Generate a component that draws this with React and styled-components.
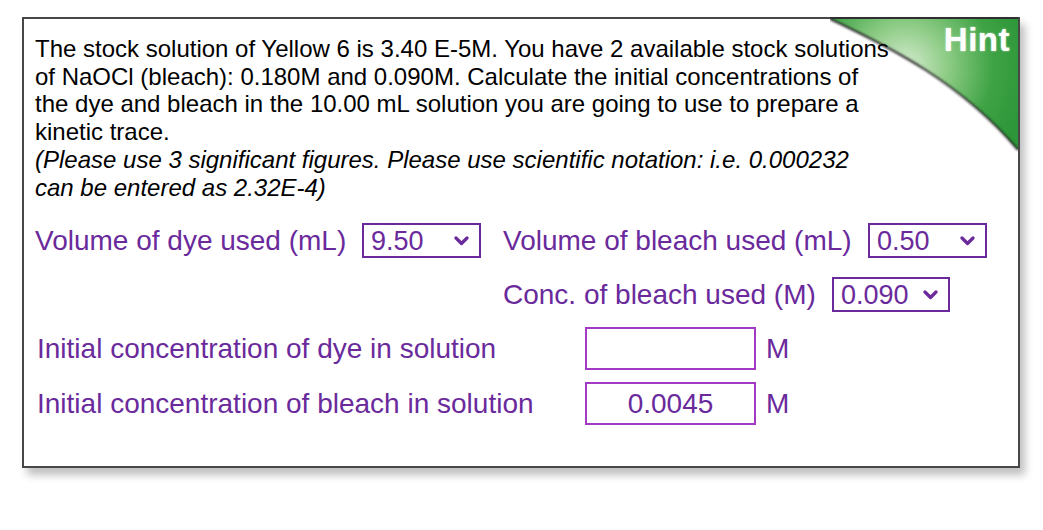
import React from 'react';
import styled, { createGlobalStyle } from 'styled-components';

const GlobalStyle = createGlobalStyle`
  html, body {
    margin: 0;
    padding: 0;
    background: #ffffff;
  }
  body {
    font-family: "Liberation Sans", Arial, sans-serif;
  }
`;

const Page = styled.div`
  width: 1043px;
  height: 530px;
  padding: 17px 0 0 22px;
  box-sizing: border-box;
`;

const Panel = styled.div`
  position: relative;
  width: 998px;
  height: 451px;
  box-sizing: border-box;
  border: 2px solid #474747;
  background: #fff;
  box-shadow: 5px 7px 8px rgba(0, 0, 0, 0.25);
  padding: 16px 0 0 11px;
`;

const Question = styled.div`
  position: relative;
  font-size: 24px;
  line-height: 27.7px;
  color: #000;
  white-space: nowrap;
`;

const Line = styled.div`
  font-style: ${(p) => (p.italic ? 'italic' : 'normal')};
`;

const Row = styled.div`
  display: flex;
  align-items: center;
  margin-left: ${(p) => p.indent || 0}px;
  margin-top: ${(p) => p.top || 0}px;
`;

const Label = styled.span`
  color: #6a2a9c;
  font-size: 28px;
  white-space: nowrap;
  width: ${(p) => (p.width ? `${p.width}px` : 'auto')};
  margin-left: ${(p) => p.left || 0}px;
`;

const Select = styled.div`
  display: flex;
  align-items: center;
  justify-content: space-between;
  box-sizing: border-box;
  width: ${(p) => p.width}px;
  height: 35px;
  margin-left: ${(p) => p.left || 0}px;
  border: 2px solid #6a2a9c;
  padding: 1px 10px 0 7px;
  color: #6a2a9c;
  font-size: 27px;
`;

const Field = styled.div`
  box-sizing: border-box;
  width: 171px;
  height: 43px;
  border: 2px solid #a23ac4;
  display: flex;
  align-items: center;
  justify-content: center;
  color: #6a2a9c;
  font-size: 28px;
`;

const Unit = styled.span`
  color: #6a2a9c;
  font-size: 28px;
  margin-left: 10px;
`;

const HintCorner = styled.div`
  position: absolute;
  top: -2px;
  right: -2px;
  width: 190px;
  height: 135px;
`;

const HintText = styled.span`
  position: absolute;
  top: 4px;
  right: 10px;
  color: #fff;
  font-family: "Liberation Sans Narrow", "Liberation Sans", Arial, sans-serif;
  font-weight: bold;
  font-size: 33px;
  letter-spacing: 0.5px;
  text-shadow: 0 0 2px rgba(255, 255, 255, 0.7);
`;

const Chevron = () => (
  <svg width="15" height="10" viewBox="0 0 15 10">
    <path d="M2 2 L7.5 7.5 L13 2" fill="none" stroke="#6a2a9c" strokeWidth="3.2" strokeLinecap="round" strokeLinejoin="round" />
  </svg>
);

const Dropdown = ({ value, width, left }) => (
  <Select width={width} left={left}>
    <span>{value}</span>
    <Chevron />
  </Select>
);

const curve = 'M0 2 C60 30, 130 65, 188 133';

const Hint = () => (
  <HintCorner>
    <svg width="190" height="135" viewBox="0 0 190 135">
      <defs>
        <radialGradient id="hg" cx="75" cy="50" r="125" gradientUnits="userSpaceOnUse">
          <stop offset="0" stopColor="#d6ecd0" />
          <stop offset="0.35" stopColor="#8ccb84" />
          <stop offset="0.7" stopColor="#3fa345" />
          <stop offset="1" stopColor="#2c9638" />
        </radialGradient>
        <filter id="hs" x="-10%" y="-10%" width="120%" height="120%">
          <feGaussianBlur stdDeviation="0.9" />
        </filter>
      </defs>
      <path d={`${curve} L190 135 L190 0 L0 0 Z`} fill="url(#hg)" />
      <path d={curve} fill="none" stroke="#2b2b2b" strokeWidth="2" filter="url(#hs)" />
      <rect x="0" y="0" width="190" height="2" fill="#2f2f2f" />
      <rect x="188" y="0" width="2" height="135" fill="#474747" />
    </svg>
    <HintText>Hint</HintText>
  </HintCorner>
);

const App = () => (
  <Page>
    <GlobalStyle />
    <Panel>
      <Hint />
      <Question>
        <Line>The stock solution of Yellow 6 is 3.40 E-5M. You have 2 available stock solutions</Line>
        <Line>of NaOCl (bleach): 0.180M and 0.090M. Calculate the initial concentrations of</Line>
        <Line>the dye and bleach in the 10.00 mL solution you are going to use to prepare a</Line>
        <Line>kinetic trace.</Line>
        <Line italic>(Please use 3 significant figures. Please use scientific notation: i.e. 0.000232</Line>
        <Line italic>can be entered as 2.32E-4)</Line>
      </Question>
      <Row top={22}>
        <Label width={327}>Volume of dye used (mL)</Label>
        <Dropdown value="9.50" width={119} />
        <Label left={22} width={365}>Volume of bleach used (mL)</Label>
        <Dropdown value="0.50" width={119} />
      </Row>
      <Row top={19} indent={468}>
        <Label width={329}>Conc. of bleach used (M)</Label>
        <Dropdown value="0.090" width={118} />
      </Row>
      <Row top={15} indent={2}>
        <Label width={548}>Initial concentration of dye in solution</Label>
        <Field />
        <Unit>M</Unit>
      </Row>
      <Row top={12} indent={2}>
        <Label width={548}>Initial concentration of bleach in solution</Label>
        <Field>0.0045</Field>
        <Unit>M</Unit>
      </Row>
    </Panel>
  </Page>
);

export default App;
